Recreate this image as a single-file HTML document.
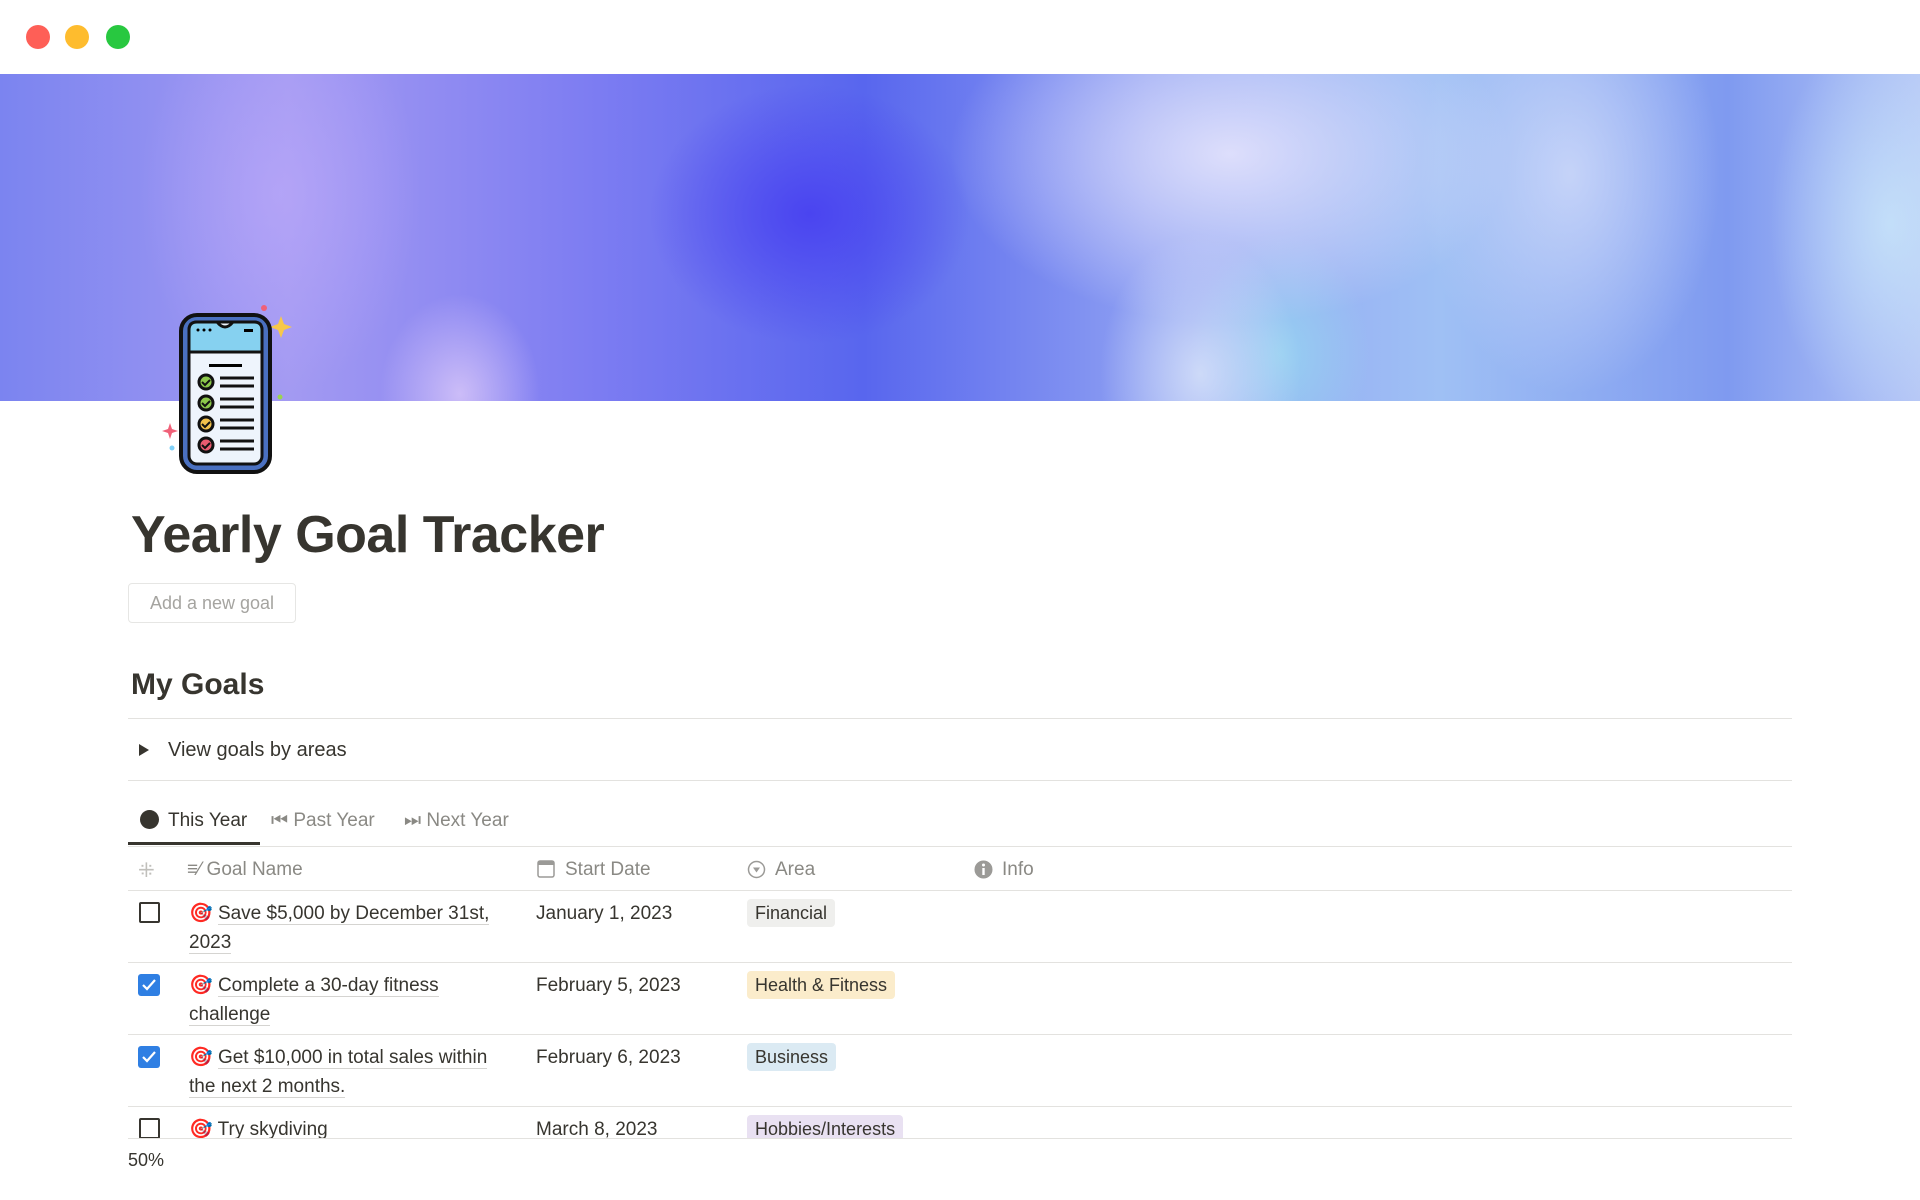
<!DOCTYPE html>
<html><head><meta charset="utf-8"><style>
*{margin:0;padding:0;box-sizing:border-box}
body{width:1920px;height:1200px;overflow:hidden;background:#fff;font-family:"Liberation Sans",sans-serif;color:#37352f;position:relative}
.dot{position:absolute;top:25px;width:24px;height:24px;border-radius:50%}
.banner{position:absolute;left:0;top:74px;width:1920px;height:327px;overflow:hidden;
background:
radial-gradient(ellipse 160px 130px at 810px 140px,#4a44f0 0%,rgba(74,68,240,0) 100%),
radial-gradient(ellipse 280px 170px at 1230px 80px,rgba(225,225,252,.95) 0%,rgba(210,215,250,0) 100%),
radial-gradient(ellipse 150px 220px at 1570px 100px,rgba(210,220,250,.8) 0%,rgba(200,210,250,0) 100%),
radial-gradient(ellipse 100px 140px at 1200px 300px,rgba(220,230,250,.8) 0%,rgba(200,220,250,0) 100%),
radial-gradient(ellipse 90px 120px at 1280px 280px,rgba(150,230,240,.6) 0%,rgba(150,230,240,0) 100%),
radial-gradient(ellipse 80px 100px at 460px 320px,rgba(230,210,250,.7) 0%,rgba(230,210,250,0) 100%),
radial-gradient(ellipse 140px 200px at 280px 120px,rgba(190,170,250,.6) 0%,rgba(190,170,250,0) 100%),
radial-gradient(ellipse 120px 200px at 1890px 150px,rgba(200,230,250,.8) 0%,rgba(200,230,250,0) 100%),
linear-gradient(90deg,#7b84f0 0%,#a39af2 15%,#7f7ef2 30%,#5866ee 45%,#8ea0f2 60%,#9fc0f4 75%,#7f9af0 90%,#b6c6f6 100%);}
.title{position:absolute;left:131px;top:505px;font-size:52px;font-weight:700;letter-spacing:-0.5px}
.btn{position:absolute;left:128px;top:583px;width:168px;height:40px;border:1px solid #e6e6e4;border-radius:4px;color:#a5a4a0;font-size:18px;line-height:38px;text-align:center}
.h2{position:absolute;left:131px;top:668px;font-size:30px;font-weight:700}
.hr{position:absolute;left:128px;width:1664px;height:1px;background:#e3e2df}
.abs{position:absolute;white-space:nowrap}
.txt{font-size:19px}
.gray{color:#8a8984}
.tag{position:absolute;height:28px;line-height:28px;padding:0 8px;border-radius:4px;font-size:18px}
.cb{position:absolute;left:139px;width:21px;height:21px;border:2px solid #37352f;border-radius:2px}
.cbc{position:absolute;left:138px;width:22px;height:22px;background:#2f7fe3;border-radius:3px}
.nm{position:absolute;left:189px;font-size:19px;line-height:29px;width:318px;font-weight:500}
.nm span{border-bottom:1px solid #d5d4d1}
</style></head><body>
<div class="dot" style="left:26px;background:#fe5f57"></div>
<div class="dot" style="left:65px;background:#febc2e"></div>
<div class="dot" style="left:106px;background:#28c840"></div>
<div class="banner"></div>
<svg class="abs" style="left:160px;top:300px" width="135" height="175" viewBox="0 0 135 175">
<circle cx="104" cy="8" r="3" fill="#f06078"/>
<path d="M121 16 l3 8 8 3 -8 3 -3 8 -3 -8 -8 -3 8 -3z" fill="#f7c84a"/>
<path d="M10 123 l2 6 6 2 -6 2 -2 6 -2 -6 -6 -2 6 -2z" fill="#f06078"/>
<circle cx="12" cy="148" r="2.5" fill="#7fd0f8"/>
<circle cx="120" cy="97" r="2.5" fill="#9ad450"/>
<rect x="21" y="15" width="89" height="157" rx="16" fill="#4a70c0" stroke="#111" stroke-width="4"/>
<rect x="29" y="22" width="73" height="142" rx="8" fill="#eef4fc" stroke="#111" stroke-width="3"/>
<path d="M29 30 q0 -8 8 -8 h20 q8 10 16 0 h21 q8 0 8 8 v22 h-73z" fill="#86d1f0" stroke="#111" stroke-width="3"/>
<circle cx="38" cy="30" r="1.5"/><circle cx="44" cy="30" r="1.5"/><circle cx="50" cy="30" r="1.5"/>
<rect x="84" y="29" width="9" height="3"/>
<rect x="49" y="64" width="33" height="3"/>
<g stroke="#111" stroke-width="3">
<circle cx="46" cy="82" r="7" fill="#8cc84b"/><circle cx="46" cy="103" r="7" fill="#8cc84b"/><circle cx="46" cy="124" r="7" fill="#f2c14b"/><circle cx="46" cy="145" r="7" fill="#ea5b70"/>
<path d="M60 78h34M60 86h34M60 99h34M60 107h34M60 120h34M60 128h34M60 141h34M60 149h34"/>
<path d="M42 82l3 3 5-5M42 103l3 3 5-5M42 124l3 3 5-5M42 145l3 3 5-5" fill="none" stroke-width="2"/>
</g></svg>
<div class="title">Yearly Goal Tracker</div>
<div class="btn">Add a new goal</div>
<div class="h2">My Goals</div>
<div class="hr" style="top:718px"></div>
<svg class="abs" style="left:138px;top:743px" width="12" height="14"><path d="M1 1 L11 7 L1 13z" fill="#37352f"/></svg>
<div class="abs" style="left:168px;top:739px;font-size:20px">View goals by areas</div>
<div class="hr" style="top:780px"></div>
<div class="abs" style="left:140px;top:810px;width:19px;height:19px;border-radius:50%;background:#37352f"></div>
<div class="abs txt" style="left:168px;top:810px;font-weight:500">This Year</div>
<div class="abs txt gray" style="left:271px;top:810px">⏮ Past Year</div>
<div class="abs txt gray" style="left:404px;top:810px">⏭ Next Year</div>
<div class="abs" style="left:128px;top:842px;width:132px;height:3px;background:#37352f"></div>
<div class="hr" style="top:846px"></div>
<div class="abs gray" style="left:138px;top:858px;font-size:20px;color:#c0bfbb">⁜</div>
<div class="abs txt gray" style="left:187px;top:859px">≡⁄ Goal Name</div>
<svg class="abs" style="left:537px;top:860px" width="18" height="18"><rect x="1" y="1" width="16" height="16" rx="2" fill="none" stroke="#9b9a97" stroke-width="1.5"/><rect x="1" y="1" width="16" height="4" fill="#9b9a97"/></svg>
<div class="abs txt gray" style="left:565px;top:859px">Start Date</div>
<svg class="abs" style="left:747px;top:860px" width="19" height="19"><circle cx="9.5" cy="9.5" r="8" fill="none" stroke="#9b9a97" stroke-width="1.5"/><path d="M6 7.5h7l-3.5 5z" fill="#9b9a97"/></svg>
<div class="abs txt gray" style="left:775px;top:859px">Area</div>
<svg class="abs" style="left:974px;top:860px" width="19" height="19"><circle cx="9.5" cy="9.5" r="9" fill="#9b9a97"/><rect x="8.3" y="8" width="2.4" height="7" fill="#fff"/><circle cx="9.5" cy="5" r="1.5" fill="#fff"/></svg>
<div class="abs txt gray" style="left:1002px;top:859px">Info</div>
<div class="hr" style="top:890px"></div>

<div class="cb" style="top:902px"></div>
<div class="nm" style="top:899px">🎯 <span>Save $5,000 by December 31st, 2023</span></div>
<div class="abs txt" style="left:536px;top:903px">January 1, 2023</div>
<div class="tag" style="left:747px;top:899px;background:#efefed">Financial</div>
<div class="hr" style="top:962px"></div>

<div class="cbc" style="top:974px"><svg width="22" height="22"><path d="M5 11l4 4 8-9" stroke="#fff" stroke-width="2.2" fill="none"/></svg></div>
<div class="nm" style="top:971px">🎯 <span>Complete a 30-day fitness challenge</span></div>
<div class="abs txt" style="left:536px;top:975px">February 5, 2023</div>
<div class="tag" style="left:747px;top:971px;background:#fbeccb">Health &amp; Fitness</div>
<div class="hr" style="top:1034px"></div>

<div class="cbc" style="top:1046px"><svg width="22" height="22"><path d="M5 11l4 4 8-9" stroke="#fff" stroke-width="2.2" fill="none"/></svg></div>
<div class="nm" style="top:1043px">🎯 <span>Get $10,000 in total sales within the next 2 months.</span></div>
<div class="abs txt" style="left:536px;top:1047px">February 6, 2023</div>
<div class="tag" style="left:747px;top:1043px;background:#dbeaf3">Business</div>
<div class="hr" style="top:1106px"></div>

<div style="position:absolute;left:0;top:1107px;width:1920px;height:31px;overflow:hidden">
<div class="cb" style="top:11px"></div>
<div class="nm" style="top:8px">🎯 <span>Try skydiving</span></div>
<div class="abs txt" style="left:536px;top:12px">March 8, 2023</div>
<div class="tag" style="left:747px;top:8px;background:#e9e1f2">Hobbies/Interests</div>
</div>
<div class="hr" style="top:1138px"></div>
<div class="abs" style="left:128px;top:1150px;font-size:18px">50%</div>
</body></html>
